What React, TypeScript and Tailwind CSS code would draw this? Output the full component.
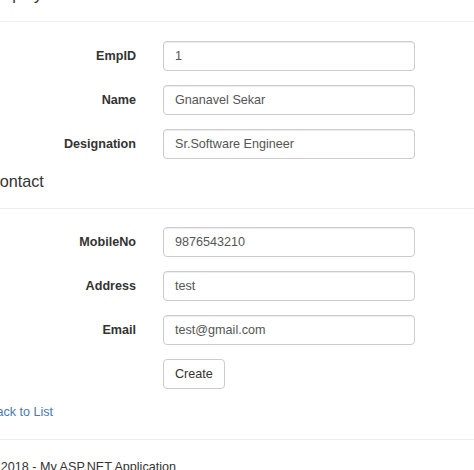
const font = { fontFamily: '"Liberation Sans", Arial, sans-serif' };

type Field = { label: string; value: string };

const employeeFields: Field[] = [
  { label: "EmpID", value: "1" },
  { label: "Name", value: "Gnanavel Sekar" },
  { label: "Designation", value: "Sr.Software Engineer" },
];

const contactFields: Field[] = [
  { label: "MobileNo", value: "9876543210" },
  { label: "Address", value: "test" },
  { label: "Email", value: "test@gmail.com" },
];

function FormRow({ label, value }: Field) {
  return (
    <div className="flex items-center">
      <label className="w-[148px] text-right font-bold text-[#333]">{label}</label>
      <div className="ml-[27px] flex h-[30px] w-[252px] items-center rounded-[4px] border border-[#ccc] px-[11px] text-[#555] shadow-[inset_0_1px_1px_rgba(0,0,0,0.075)]">
        {value}
      </div>
    </div>
  );
}

export default function App() {
  return (
    <div
      className="h-[470px] w-[474px] overflow-hidden bg-white text-[12.6px] leading-[18px] text-[#333]"
      style={font}
    >
      <div className="ml-[-12px] flex flex-col">
        <h4 className="mt-[-15px] text-[16.2px] leading-[18px]">Employee</h4>
        <hr className="mt-[18px] border-t border-[#eee]" />

        <div className="mt-[19px] flex flex-col gap-[14px]">
          {employeeFields.map((f) => (
            <FormRow key={f.label} {...f} />
          ))}
        </div>

        <h4 className="mt-[13px] text-[16.2px] leading-[18px]">Contact</h4>
        <hr className="mt-[18px] border-t border-[#eee]" />

        <div className="mt-[18px] flex flex-col gap-[14px]">
          {contactFields.map((f) => (
            <FormRow key={f.label} {...f} />
          ))}
          <div className="flex">
            <div className="w-[148px]" />
            <button
              type="button"
              className="ml-[27px] h-[30px] rounded-[4px] border border-[#ccc] bg-white px-[11px] text-[#333]"
            >
              Create
            </button>
          </div>
        </div>

        <div className="mt-[13.5px]">
          <a href="#" className="text-[#4a7ab0]">
            Back to List
          </a>
        </div>

        <hr className="mt-[18px] border-t border-[#eee]" />
        <p className="mt-[18px]">© 2018 - My ASP.NET Application</p>
      </div>
    </div>
  );
}
